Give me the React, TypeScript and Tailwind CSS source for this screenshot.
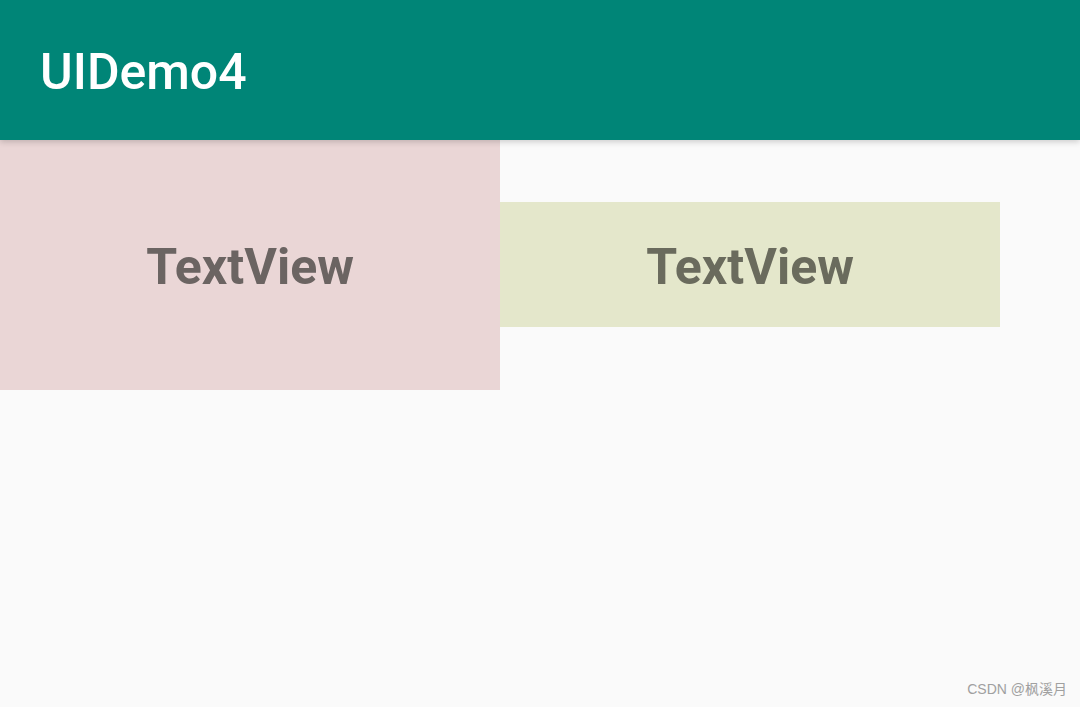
export default function App() {
  return (
    <div className="relative w-[1080px] h-[707px] bg-[#fafafa] overflow-hidden font-['Roboto',sans-serif]">
      <header className="relative z-10 h-[140px] bg-[#008577] flex items-center pl-10 pt-[4px] shadow-[0_2px_6px_rgba(0,0,0,0.18)]">
        <h1 className="text-white text-[50px] font-medium leading-none">UIDemo4</h1>
      </header>
      <div className="flex items-start">
        <div className="w-[500px] h-[250px] bg-[#ead6d6] flex items-center justify-center pt-[4px]">
          <span className="text-[50px] font-bold text-[#6b6462] leading-none">TextView</span>
        </div>
        <div className="mt-[62px] w-[500px] h-[125px] bg-[#e4e7cb] flex items-center justify-center pt-[4px]">
          <span className="text-[50px] font-bold text-[#6a6b5d] leading-none">TextView</span>
        </div>
      </div>
      <div className="absolute right-[13px] bottom-[7px] text-[14px] text-[#a0a0a0] font-['Liberation_Sans','Noto_Sans_CJK_SC',sans-serif]">
        CSDN @枫溪月
      </div>
    </div>
  );
}
